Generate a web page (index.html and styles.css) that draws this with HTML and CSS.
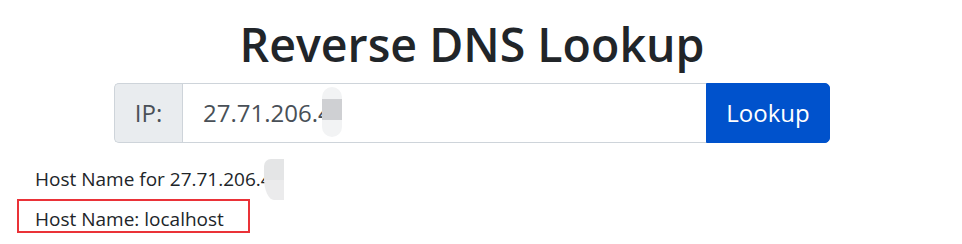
FILE: index.html
```html
<!DOCTYPE html>
<html lang="en">
<head>
<meta charset="utf-8">
<title>Reverse DNS Lookup</title>
<link rel="stylesheet" href="styles.css">
</head>
<body>
<div class="page">
  <h1 class="title">Reverse DNS Lookup</h1>
  <form class="search">
    <span class="search-label">IP:</span>
    <div class="search-field">
      <span class="search-value">27.71.206.4</span>
      <span class="redact redact-input"><span class="redact-core"></span></span>
    </div>
    <button type="button" class="search-btn">Lookup</button>
  </form>
  <div class="results">
    <p class="result-line">Host Name for 27.71.206.4<span class="redact redact-text"></span></p>
    <p class="result-box">Host Name: localhost</p>
  </div>
</div>
</body>
</html>
```

FILE: styles.css
```css
html, body {
  margin: 0;
  padding: 0;
  background: #ffffff;
}

body {
  font-family: "Open Sans", "Noto Sans", "Liberation Sans", sans-serif;
  color: #212529;
  overflow: hidden;
}

.page {
  width: 944px;
}

.title {
  margin: 17px 0 10px;
  font-size: 46.5px;
  font-weight: 600;
  line-height: 1.2;
  text-align: center;
  color: #212529;
}

.search {
  display: flex;
  width: 716px;
  height: 60px;
  margin: 0 auto;
  font-size: 24px;
  line-height: 36px;
}

.search-label {
  box-sizing: border-box;
  width: 68px;
  padding: 11px 0;
  text-align: center;
  color: #495057;
  background: #e9ecef;
  border: 1px solid #ced4da;
  border-right: 0;
  border-radius: 5px 0 0 5px;
}

.search-field {
  position: relative;
  flex: 1;
  box-sizing: border-box;
  padding: 11px 20px;
  color: #495057;
  border: 1px solid #ced4da;
  border-right: 0;
}

.search-btn {
  box-sizing: border-box;
  width: 124px;
  margin: 0;
  padding: 0;
  font: inherit;
  color: #ffffff;
  background: #0052cc;
  border: 1px solid #0052cc;
  border-radius: 0 5px 5px 0;
}

.redact {
  position: absolute;
  display: block;
}

.redact-input {
  left: 139px;
  top: 3px;
  width: 20px;
  height: 50px;
  background: #f2f3f4;
  border-radius: 10px;
  overflow: hidden;
}

.redact-core {
  position: absolute;
  left: 0;
  top: 12px;
  width: 20px;
  height: 21px;
  background: #cfd0d3;
}

.results {
  padding-left: 35px;
  font-size: 19px;
  line-height: 28px;
}

.result-line {
  position: relative;
  margin: 22px 0 6px;
}

.redact-text {
  left: 229px;
  top: -6px;
  width: 20px;
  height: 41px;
  background: linear-gradient(#e4e5e6 0 50%, #ebebec 50% 100%);
  border-radius: 7px 0 0 10px / 7px 0 0 22px;
}

.result-box {
  box-sizing: border-box;
  width: 233px;
  height: 34px;
  margin: 0 0 0 -18px;
  padding: 5px 0 0 16px;
  line-height: 26px;
  border: 2px solid #ea3238;
}
```
